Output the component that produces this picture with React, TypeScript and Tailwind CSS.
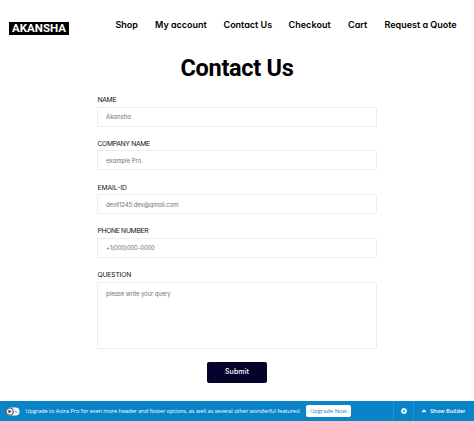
import { ChevronUp } from "lucide-react";

interface Field {
  name: string;
  label: string;
  placeholder: string;
  labelTracking: string;
  tracking: string;
}

const navItems = [
  { label: "Shop", className: "w-[39.5px]" },
  { label: "My account", className: "w-[68.5px]" },
  { label: "Contact Us", className: "w-[65px]" },
  { label: "Checkout", className: "w-[59.5px] tracking-[0.05px]" },
  { label: "Cart", className: "w-[36.5px]" },
  { label: "Request a Quote", className: "w-[74px]" },
];

const fields: Field[] = [
  {
    name: "name",
    label: "NAME",
    placeholder: "Akansha",
    labelTracking: "tracking-[-0.35px]",
    tracking: "tracking-[0]",
  },
  {
    name: "company",
    label: "COMPANY NAME",
    placeholder: "example Pro.",
    labelTracking: "tracking-[-0.35px]",
    tracking: "tracking-[0]",
  },
  {
    name: "email",
    label: "EMAIL-ID",
    placeholder: "devli1245.dev@gmail.com",
    labelTracking: "tracking-[-0.1px]",
    tracking: "tracking-[-0.08px]",
  },
  {
    name: "phone",
    label: "PHONE NUMBER",
    placeholder: "+1(000)000-0000",
    labelTracking: "tracking-[-0.35px]",
    tracking: "tracking-[-0.18px]",
  },
];

function Header() {
  return (
    <header className="flex h-[50px] pl-[9px]">
      <div className="mt-[22px] flex h-[13px] w-[60px] items-center justify-center bg-black pt-px font-['Roboto'] text-[11.5px] font-bold leading-none text-white">
        AKANSHA
      </div>
      <nav className="ml-[46.5px] mt-[17px] flex h-[14px] items-center font-['Inter'] text-[9px] font-semibold leading-none text-black [font-feature-settings:'cv11']">
        {navItems.map((item) => (
          <a key={item.label} href="#" className={`block whitespace-nowrap ${item.className}`}>
            {item.label}
          </a>
        ))}
      </nav>
    </header>
  );
}

function ContactForm() {
  return (
    <form className="ml-[97px] mt-[16px] w-[280px] font-['Inter']">
      {fields.map((field) => (
        <div key={field.name} className="h-[43.8px]">
          <label className={`block h-[10.5px] pl-[0.5px] text-[6.8px] leading-[8.6px] text-[#10101a] ${field.labelTracking}`}>
            {field.label}
          </label>
          <input
            name={field.name}
            placeholder={field.placeholder}
            className={`block h-[20px] w-full rounded-[1px] border border-[#ededf2] bg-white px-[8px] text-[6px] outline-none [font-feature-settings:'cv11'] placeholder:text-[#72727c] ${field.tracking}`}
          />
        </div>
      ))}
      <label className="block h-[10.5px] pl-[0.5px] text-[6.8px] leading-[8.6px] tracking-[-0.2px] text-[#10101a]">
        QUESTION
      </label>
      <textarea
        name="question"
        placeholder="please write your query"
        className="block h-[67px] w-full resize-none rounded-[1px] border border-[#ededf2] bg-white px-[8px] py-[6px] text-[6px] leading-[9px] tracking-[-0.12px] outline-none [font-feature-settings:'cv11'] placeholder:text-[#72727c]"
      />
      <button
        type="button"
        className="mx-auto mt-[13px] block h-[21px] w-[60px] rounded-[2px] bg-[#05032b] pt-px text-[7px] font-medium tracking-[0.1px] text-white"
      >
        Submit
      </button>
    </form>
  );
}

function UpgradeBar() {
  return (
    <footer className="flex h-[20px] items-center bg-[#0a84c8] font-['Open_Sans'] text-[5.6px] text-white">
      <svg className="ml-[5px] h-[9px] w-[15px] shrink-0" viewBox="0 0 15 9">
        <rect x="1" y="0.5" width="13.5" height="8" rx="4" fill="#fff" />
        <circle cx="4.7" cy="4.5" r="3.6" fill="#fff" stroke="#59636d" strokeWidth="1.3" />
        <path d="M3.4 2.5 6.8 4.5 3.4 6.5Z" fill="#444e58" />
        <path d="M9.6 3.2 11 4.5 9.6 5.8M11.8 4v2.2" fill="none" stroke="#6fa0bd" strokeWidth="0.9" />
      </svg>
      <p className="ml-[5.5px] w-[276px] whitespace-nowrap tracking-[-0.045px]">
        Upgrade to Astra Pro for even more header and footer options, as well as several other wonderful features!
      </p>
      <button
        type="button"
        className="ml-[4.5px] h-[12px] w-[45px] shrink-0 rounded-[2px] bg-white text-[5.8px] text-[#2688bd]"
      >
        Upgrade Now
      </button>
      <div className="ml-[42px] flex h-full w-[21px] items-center justify-center border-x border-[#2593d1]">
        <svg className="h-[6px] w-[6px]" viewBox="0 0 12 12">
          <path
            fill="#fff"
            fillRule="evenodd"
            d="M5 0h2l.4 1.5 1.2.5L10 1.2 11.3 2.7 10.4 4l.4 1.1L12 5.5v1.8l-1.4.5-.5 1.1.6 1.4-1.4 1.2L8 10.7l-1 .3-.4 1h-2L4 10.6 3 10l-1.5.5L.4 9.1l.8-1.4L.9 6.6 0 6V4.5l1.3-.6.6-1.2-.5-1.4L2.9.4 4 1.4ZM6 4a2 2 0 1 0 0 4 2 2 0 0 0 0-4Z"
          />
        </svg>
      </div>
      <div className="flex items-center pl-[7px] font-semibold">
        <ChevronUp size={6} strokeWidth={5} />
        <span className="ml-[3px] whitespace-nowrap">Show Builder</span>
      </div>
    </footer>
  );
}

export default function App() {
  return (
    <div className="flex h-[421px] w-[474px] flex-col overflow-hidden bg-white">
      <Header />
      <main className="flex-1">
        <h1 className="h-[30px] pt-[3px] text-center font-['Roboto'] text-[23.5px] font-bold leading-[30px] tracking-[-0.3px] text-black">
          Contact Us
        </h1>
        <ContactForm />
      </main>
      <UpgradeBar />
    </div>
  );
}
